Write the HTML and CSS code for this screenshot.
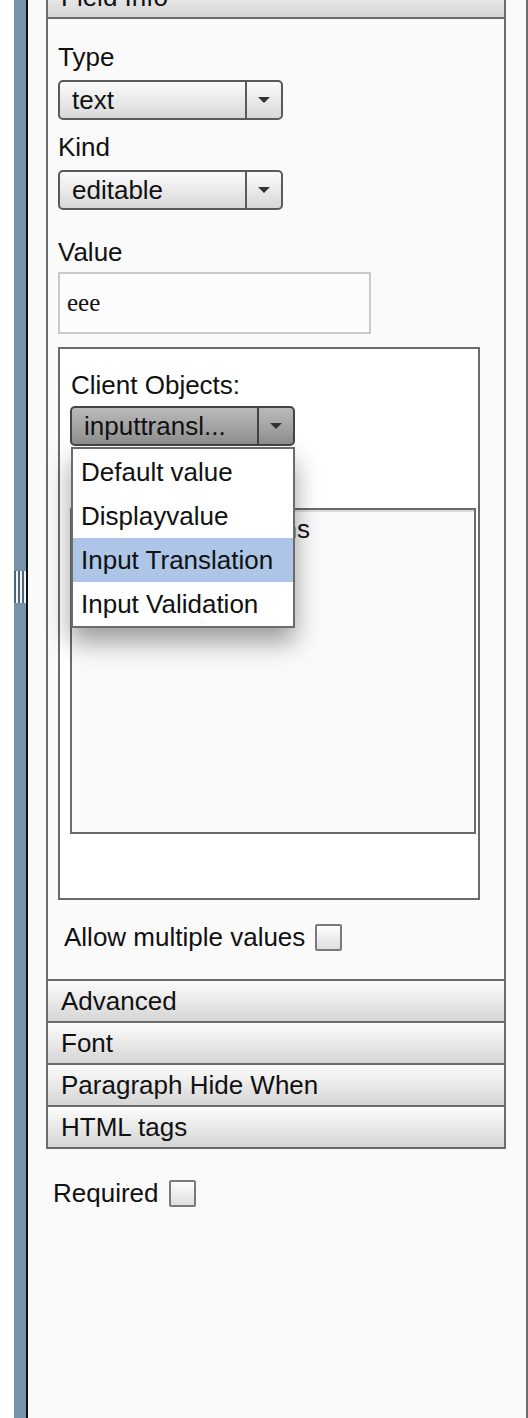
FILE: index.html
```html
<!DOCTYPE html>
<html lang="en">
<head>
    <meta charset="UTF-8">
    <meta name="viewport" content="width=device-width, initial-scale=1.0">
    <title>Field properties</title>
    <link rel="stylesheet" href="styles.css">
</head>
<body>
<div class="app">
    <div class="gutter"></div>
    <div class="splitter"><div class="splitter-handle"></div></div>
    <div class="divider"></div>

    <div class="panel">
        <div class="accordion">
            <div class="acc-header">Field Info</div>
            <div class="acc-body">
                <div class="field-label">Type</div>
                <div class="select">
                    <span class="select-value">text</span>
                    <span class="select-arrow"></span>
                </div>

                <div class="field-label spaced">Kind</div>
                <div class="select">
                    <span class="select-value">editable</span>
                    <span class="select-arrow"></span>
                </div>

                <div class="field-label value-label">Value</div>
                <div class="text-input">eee</div>

                <div class="objects-box">
                    <div class="field-label">Client Objects:</div>
                    <div class="select-wrap">
                        <div class="select active">
                            <span class="select-value">inputtransl...</span>
                            <span class="select-arrow"></span>
                        </div>
                        <!-- menu abierto -->
                        <ul class="menu">
                            <li>Default value</li>
                            <li>Displayvalue</li>
                            <li class="selected">Input Translation</li>
                            <li>Input Validation</li>
                        </ul>
                    </div>
                    <div class="functions-box">
                        <div class="field-label">Available Functions</div>
                    </div>
                </div>

                <label class="check-row multi">
                    <span>Allow multiple values</span>
                    <span class="checkbox"></span>
                </label>
            </div>
            <div class="acc-header">Advanced</div>
            <div class="acc-header">Font</div>
            <div class="acc-header">Paragraph Hide When</div>
            <div class="acc-header last">HTML tags</div>
        </div>

        <label class="check-row required">
            <span>Required</span>
            <span class="checkbox"></span>
        </label>
    </div>
</div>
</body>
</html>
```

FILE: styles.css
```css
body {
    margin: 0;
    font-family: "Liberation Sans", Arial, sans-serif;
    font-size: 26px;
    color: #111;
    background: #fff;
}
.app {
    display: flex;
    height: 1418px;
}
.gutter {
    width: 14px;
    background: #fff;
}
.splitter {
    width: 12px;
    background: #7893a9;
    padding-top: 571px;
    box-sizing: border-box;
}
.splitter-handle {
    height: 32px;
    background: repeating-linear-gradient(90deg, #4f6677 0 2px, #eef2f5 2px 4px);
}
.divider {
    width: 2px;
    background: #111;
}
.panel {
    flex: 1;
    background: #fafafa;
    border-right: 2px solid #6b6b6b;
    padding-left: 18px;
    overflow: hidden;
}
.accordion {
    width: 460px;
    box-sizing: border-box;
    margin-top: -25px;
    border: 2px solid #6b6b6b;
}
.acc-header {
    height: 40px;
    line-height: 40px;
    padding-left: 13px;
    border-bottom: 2px solid #6b6b6b;
    background: linear-gradient(#fcfcfc, #d5d5d5);
}
.acc-header.last {
    border-bottom: none;
}
.acc-body {
    height: 962px;
    box-sizing: border-box;
    padding: 23px 10px 0;
    border-bottom: 2px solid #6b6b6b;
    background: #fafafa;
}
.field-label {
    line-height: 30px;
}
.field-label.spaced {
    margin-top: 12px;
}
.field-label.value-label {
    margin-top: 27px;
}
.select {
    display: flex;
    width: 225px;
    height: 40px;
    box-sizing: border-box;
    margin-top: 8px;
    border: 2px solid #5a5a5a;
    border-radius: 5px;
    background: linear-gradient(#fbfbfb, #d8d8d8);
    box-shadow: 0 1px 1px rgba(255,255,255,0.9);
}
.select-value {
    flex: 1;
    padding-left: 12px;
    line-height: 36px;
    white-space: nowrap;
}
.select-arrow {
    width: 34px;
    border-left: 2px solid #5a5a5a;
    display: flex;
    align-items: center;
    justify-content: center;
}
.select-arrow::before {
    content: "";
    border-left: 6px solid transparent;
    border-right: 6px solid transparent;
    border-top: 6px solid #333;
}
.select.active {
    background: linear-gradient(#bababa, #8f8f8f);
    border-color: #444;
}
.select.active .select-arrow {
    border-left-color: #444;
}
.text-input {
    width: 313px;
    height: 62px;
    box-sizing: border-box;
    margin-top: 5px;
    padding-left: 7px;
    border: 2px solid #c9c9c9;
    background: #fcfcfc;
    font-family: "Liberation Serif", "Times New Roman", serif;
    font-size: 25px;
    line-height: 58px;
}
.objects-box {
    width: 422px;
    box-sizing: border-box;
    margin-top: 13px;
    padding: 21px 2px 64px 10px;
    border: 2px solid #6b6b6b;
    background: #fff;
}
.objects-box > .field-label {
    padding-left: 1px;
}
.select-wrap {
    position: relative;
    margin-top: 6px;
}
.select-wrap .select {
    margin-top: 0;
}
.menu {
    position: absolute;
    top: 41px;
    left: 1px;
    width: 224px;
    box-sizing: border-box;
    margin: 0;
    padding: 1px 0 0;
    list-style: none;
    background: #fff;
    border: 2px solid #6b6b6b;
    box-shadow: 0 14px 24px rgba(0,0,0,0.38);
    z-index: 2;
}
.menu li {
    height: 44px;
    line-height: 44px;
    padding-left: 8px;
    white-space: nowrap;
}
.menu li.selected {
    background: #adc6e8;
}
.functions-box {
    height: 326px;
    box-sizing: border-box;
    margin-top: 62px;
    padding: 4px 0 0 13px;
    border: 2px solid #6b6b6b;
    background: #fafafa;
    box-shadow: inset 0 2px 0 #dcdcdc;
}
.check-row {
    display: flex;
    align-items: center;
    gap: 10px;
    line-height: 30px;
}
.check-row.multi {
    margin-top: 22px;
    padding-left: 6px;
}
.check-row.required {
    margin-top: 29px;
    margin-left: 7px;
}
.checkbox {
    width: 27px;
    height: 27px;
    box-sizing: border-box;
    border: 2px solid #7a7a7a;
    border-radius: 2px;
    background: linear-gradient(#fdfdfd, #dedede);
}
```
